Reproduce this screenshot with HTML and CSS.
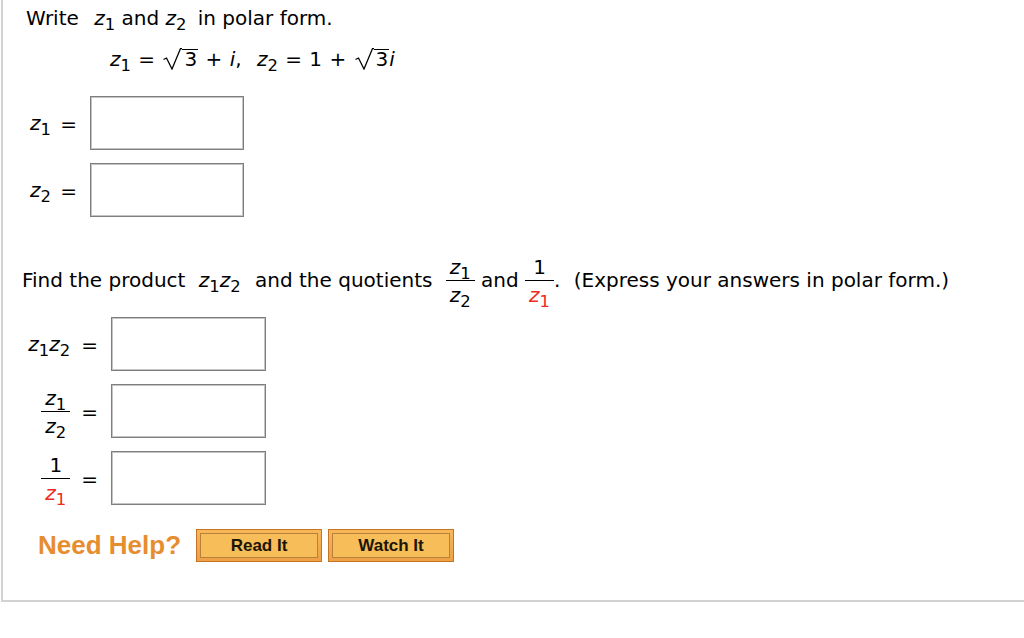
FILE: index.html
```html
<!DOCTYPE html>
<html lang="en">
<head>
<meta charset="utf-8">
<title>Polar form</title>
<link rel="stylesheet" href="styles.css">
</head>
<body>
<div class="panel">
  <p class="prompt">Write <span class="m m-l"><i>z</i><sub>1</sub></span> and <span class="m m-r"><i>z</i><sub>2</sub></span> in polar form.</p>
  <p class="eq"><span class="m"><i>z</i><sub>1</sub></span> <span class="op">=</span> <span class="sqrt"><svg class="rad-sign" width="19" height="22" viewBox="0 0 19 22"><path d="M0.5 11.5 L3.5 10 L9 21 L17.5 0.6 L19 0.6" fill="none" stroke="#000" stroke-width="1.3"/></svg><span class="radicand">3</span></span> <span class="op">+</span> <i>i</i>,<span class="sep"></span> <span class="m"><i>z</i><sub>2</sub></span> <span class="op">=</span> 1 <span class="op">+</span> <span class="sqrt"><svg class="rad-sign" width="19" height="22" viewBox="0 0 19 22"><path d="M0.5 11.5 L3.5 10 L9 21 L17.5 0.6 L19 0.6" fill="none" stroke="#000" stroke-width="1.3"/></svg><span class="radicand">3</span></span><i>i</i></p>

  <div class="answers one">
    <div class="row">
      <div class="label"><span class="m"><i>z</i><sub>1</sub></span><span class="eqs">=</span></div>
      <div class="box"></div>
    </div>
    <div class="row">
      <div class="label"><span class="m"><i>z</i><sub>2</sub></span><span class="eqs">=</span></div>
      <div class="box"></div>
    </div>
  </div>

  <p class="find">Find the product <span class="m m-l2 m-r2"><i>z</i><sub>1</sub><i>z</i><sub>2</sub></span> and the quotients <span class="frac inline first"><span class="num"><i>z</i><sub>1</sub></span><span class="den"><i>z</i><sub>2</sub></span></span> and <span class="frac inline"><span class="num">1</span><span class="den red"><i>z</i><sub>1</sub></span></span>.<span class="gap"></span> (Express your answers in polar form.)</p>

  <div class="answers two">
    <div class="row">
      <div class="label"><span class="m"><i>z</i><sub>1</sub><i>z</i><sub>2</sub></span><span class="eqs">=</span></div>
      <div class="box"></div>
    </div>
    <div class="row">
      <div class="label"><span class="frac"><span class="num"><i>z</i><sub>1</sub></span><span class="den"><i>z</i><sub>2</sub></span></span><span class="eqs">=</span></div>
      <div class="box"></div>
    </div>
    <div class="row">
      <div class="label"><span class="frac"><span class="num">1</span><span class="den red"><i>z</i><sub>1</sub></span></span><span class="eqs">=</span></div>
      <div class="box"></div>
    </div>
  </div>

  <div class="help">
    <span class="help-title">Need Help?</span>
    <span class="btn"><span class="btn-inner">Read It</span></span>
    <span class="btn"><span class="btn-inner">Watch It</span></span>
  </div>
</div>
</body>
</html>
```

FILE: styles.css
```css
html, body {
  margin: 0;
  padding: 0;
  background: #fff;
}

body {
  font-family: "DejaVu Sans", Verdana, sans-serif;
  font-size: 20px;
  color: #000;
}

.panel {
  box-sizing: border-box;
  margin-left: 1px;
  width: 1023px;
  height: 602px;
  border-left: 2px solid #d2d2d2;
  border-bottom: 2px solid #d2d2d2;
  padding: 6px 0 0 19px;
}

p {
  margin: 0;
}

i {
  font-style: italic;
}

sub {
  font-size: 0.82em;
  vertical-align: -5px;
  line-height: 0;
}

.m-l { margin-left: 9px; }
.m-r { margin-right: 5px; }
.m-l2 { margin-left: 7px; }
.m-r2 { margin-right: 8px; }

.prompt {
  line-height: 24px;
  padding-left: 4px;
}

.eq {
  margin-top: 14px;
  height: 30px;
  line-height: 30px;
  padding-left: 88px;
  white-space: nowrap;
}

.op {
  margin: 0 1px;
}

.sep {
  display: inline-block;
  width: 9px;
}

.sqrt {
  white-space: nowrap;
}

.rad-sign {
  vertical-align: -4px;
  margin-left: 1px;
}

.radicand {
  display: inline-block;
  line-height: 19.5px;
  border-top: 1.3px solid #000;
  padding: 0 1px 0 2px;
}

.answers {
  display: flex;
  flex-direction: column;
  gap: 13px;
}

.answers.one {
  margin-top: 22px;
}

.answers.two {
  margin-top: 12px;
}

.row {
  display: flex;
  align-items: center;
  gap: 13px;
  height: 54px;
}

.label {
  display: flex;
  align-items: center;
  line-height: 22px;
}

.one .label {
  box-sizing: border-box;
  width: 55px;
  padding-left: 8px;
  justify-content: space-between;
}

.two .label {
  width: 76px;
  justify-content: flex-end;
  gap: 11px;
}

.eqs {
  padding-top: 2px;
}

.box {
  box-sizing: border-box;
  width: 154px;
  height: 54px;
  border: 1px solid #7e7e7e;
  box-shadow: inset 0 0 0 1px #c4c4c4;
  background: #fff;
}

.two .box {
  width: 155px;
}

.find {
  margin-top: 38px;
  line-height: 24px;
  white-space: nowrap;
}

.gap {
  display: inline-block;
  width: 7px;
}

.frac {
  display: inline-flex;
  flex-direction: column;
  align-items: stretch;
  text-align: center;
}

.frac.inline {
  vertical-align: 13px;
}

.frac.first {
  margin-left: 7px;
}

.frac .num {
  line-height: 24px;
  padding: 0 4px 1px;
  border-bottom: 1px solid #000;
}

.frac .den {
  line-height: 20px;
  padding: 4px 4px 0;
}

.red {
  color: #ee2a22;
}

.help {
  margin-top: 24px;
  display: flex;
  align-items: center;
  height: 33px;
  padding-left: 16px;
}

.help-title {
  font-family: "Liberation Sans", Arial, sans-serif;
  font-weight: bold;
  font-size: 26px;
  color: #e68d30;
  margin-right: 15px;
}

.btn {
  box-sizing: border-box;
  width: 126px;
  height: 33px;
  padding: 3px;
  border: 1px solid #c47422;
  background: linear-gradient(#f7b85a, #eda046);
  margin-right: 6px;
  display: flex;
}

.btn-inner {
  flex: 1;
  display: flex;
  align-items: center;
  justify-content: center;
  border: 1px solid #b9803c;
  background: #f6bd58;
  font-family: "Liberation Sans", Arial, sans-serif;
  font-weight: bold;
  font-size: 17px;
  color: #1c1608;
}
```
